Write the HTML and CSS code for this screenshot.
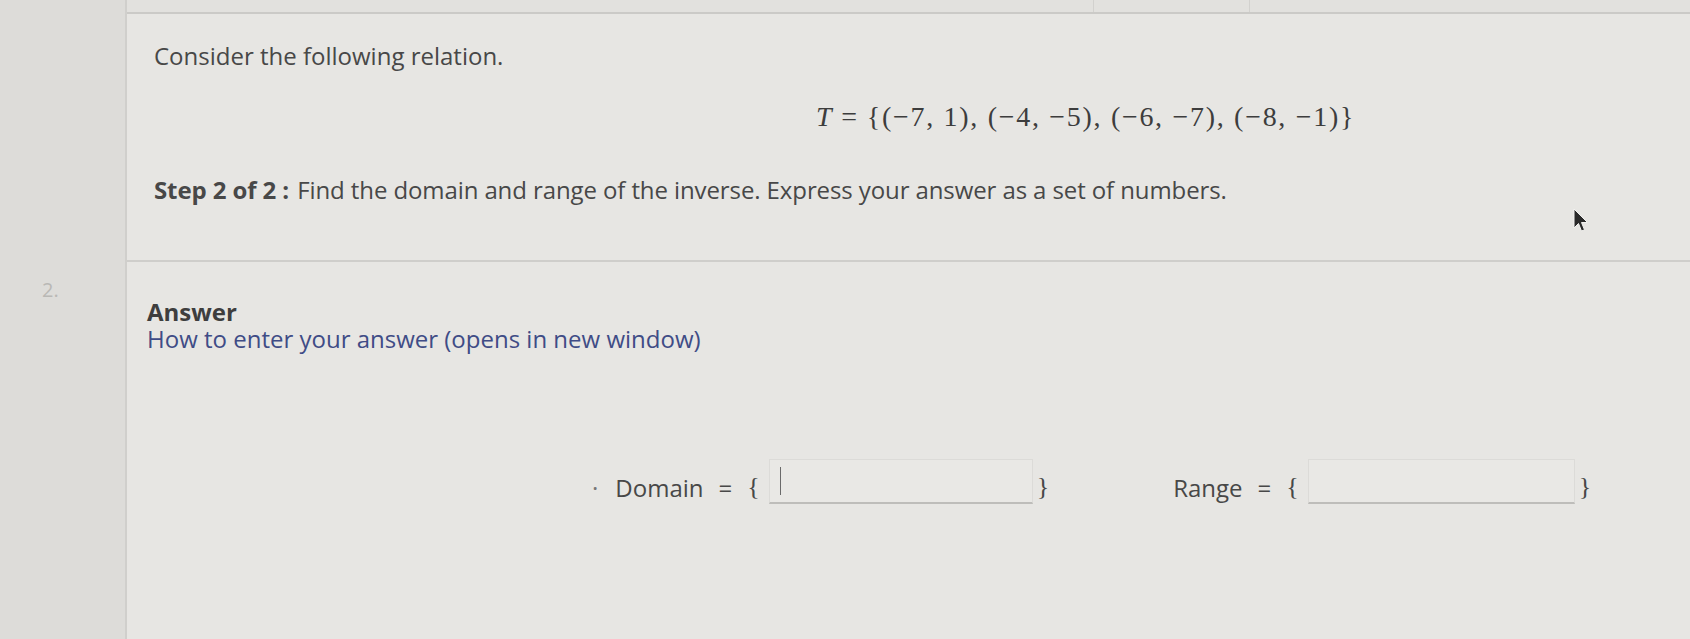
FILE: index.html
```html
<!DOCTYPE html>
<html>
<head>
<meta charset="utf-8">
<link rel="stylesheet" href="styles.css">
</head>
<body>
<div class="page">
  <aside class="gutter">
    <span class="qnum">2.</span>
  </aside>
  <main class="main">
    <div class="topbar">
      <span class="tab"></span>
      <span class="tab"></span>
    </div>
    <section class="question">
      <p class="intro">Consider the following relation.</p>
      <p class="equation"><i>T</i><span class="eq">=</span>{(−7, 1), (−4, −5), (−6, −7), (−8, −1)}</p>
      <p class="step"><b>Step 2 of 2 :</b> Find the domain and range of the inverse. Express your answer as a set of numbers.</p>
    </section>
    <section class="answer">
      <h2 class="answer-title">Answer</h2>
      <a class="help-link">How to enter your answer (opens in new window)</a>
      <div class="fields">
        <div class="field field-domain">
          <span class="bullet">·</span>
          <span class="label">Domain</span>
          <span class="eqsign">=</span>
          <span class="brace">{</span>
          <span class="box"><span class="caret"></span></span>
          <span class="brace">}</span>
        </div>
        <div class="field field-range">
          <span class="label">Range</span>
          <span class="eqsign">=</span>
          <span class="brace">{</span>
          <span class="box box-wide"></span>
          <span class="brace">}</span>
        </div>
      </div>
    </section>
  </main>
  <svg class="cursor" width="16" height="26" viewBox="0 0 16 26">
    <path d="M1 1 L1 20 L5.5 15.5 L8.5 23 L11.5 21.8 L8.5 14.5 L14.5 14.5 Z" fill="#2a2a2a" stroke="#f2f2f0" stroke-width="1"/>
  </svg>
</div>
</body>
</html>
```
FILE: styles.css
```css
html, body {
  margin: 0;
  padding: 0;
}
body {
  width: 1690px;
  height: 639px;
  overflow: hidden;
  background: #e7e6e3;
  font-family: "Open Sans", "Liberation Sans", sans-serif;
  color: #484848;
}
.page {
  position: relative;
  display: flex;
  height: 639px;
}
.gutter {
  width: 125px;
  flex: none;
  background: #dddcd9;
  border-right: 2px solid #d0cfcc;
  position: relative;
}
.qnum {
  position: absolute;
  left: 42px;
  top: 276px;
  font-size: 20px;
  color: #b9b8b5;
}
.main {
  flex: 1;
  display: flex;
  flex-direction: column;
}
.topbar {
  height: 12px;
  background: #e2e1de;
  border-bottom: 2px solid #cbcac7;
  display: flex;
  justify-content: flex-end;
  gap: 155px;
  padding-right: 440px;
}
.tab {
  width: 1px;
  background: #d2d1ce;
}
.question {
  padding: 26px 0 0 27px;
  height: 220px;
  border-bottom: 2px solid #cfcecb;
}
.question p {
  margin: 0;
}
.intro {
  font-size: 24px;
  line-height: 32px;
}
.equation {
  font-family: "Liberation Serif", "Times New Roman", serif;
  font-size: 28px;
  line-height: 32px;
  letter-spacing: 1.7px;
  margin-top: 29px !important;
  padding-left: 662px;
  color: #3d3d3d;
}
.equation i {
  margin-right: 8px;
}
.eq {
  margin-right: 8px;
}
.step {
  font-size: 24px;
  line-height: 32px;
  margin-top: 41px !important;
  letter-spacing: -0.1px;
}
.step b {
  font-weight: 700;
  margin-right: 2px;
}
.answer {
  padding: 36px 0 0 20px;
  display: flex;
  flex-direction: column;
}
.answer-title {
  margin: 0;
  font-size: 24px;
  line-height: 28px;
  font-weight: 700;
  color: #3e3e3e;
}
.help-link {
  display: block;
  font-size: 24px;
  line-height: 26px;
  color: #3f4c86;
}
.fields {
  display: flex;
  align-items: center;
  margin-top: 107px;
  padding-left: 445px;
  gap: 124px;
}
.field {
  display: flex;
  align-items: center;
  font-size: 24px;
}
.field > span:not(.box) {
  margin-top: 11px;
}
.bullet {
  margin-right: 17px;
  color: #777;
}
.label {
  margin-right: 15px;
}
.eqsign {
  margin-right: 15px;
}
.brace {
  font-family: "Liberation Serif", serif;
  font-size: 26px;
}
.box {
  width: 262px;
  height: 42px;
  margin: 0 4px 0 9px;
  border: 1px solid #dcdbd8;
  border-bottom: 2px solid #bebdba;
  background: #e9e8e5;
  display: flex;
  align-items: center;
}
.box-wide {
  width: 265px;
}
.caret {
  width: 1px;
  height: 28px;
  background: #6a6a6a;
  margin-left: 10px;
}
.cursor {
  position: absolute;
  left: 1573px;
  top: 208px;
}
```
